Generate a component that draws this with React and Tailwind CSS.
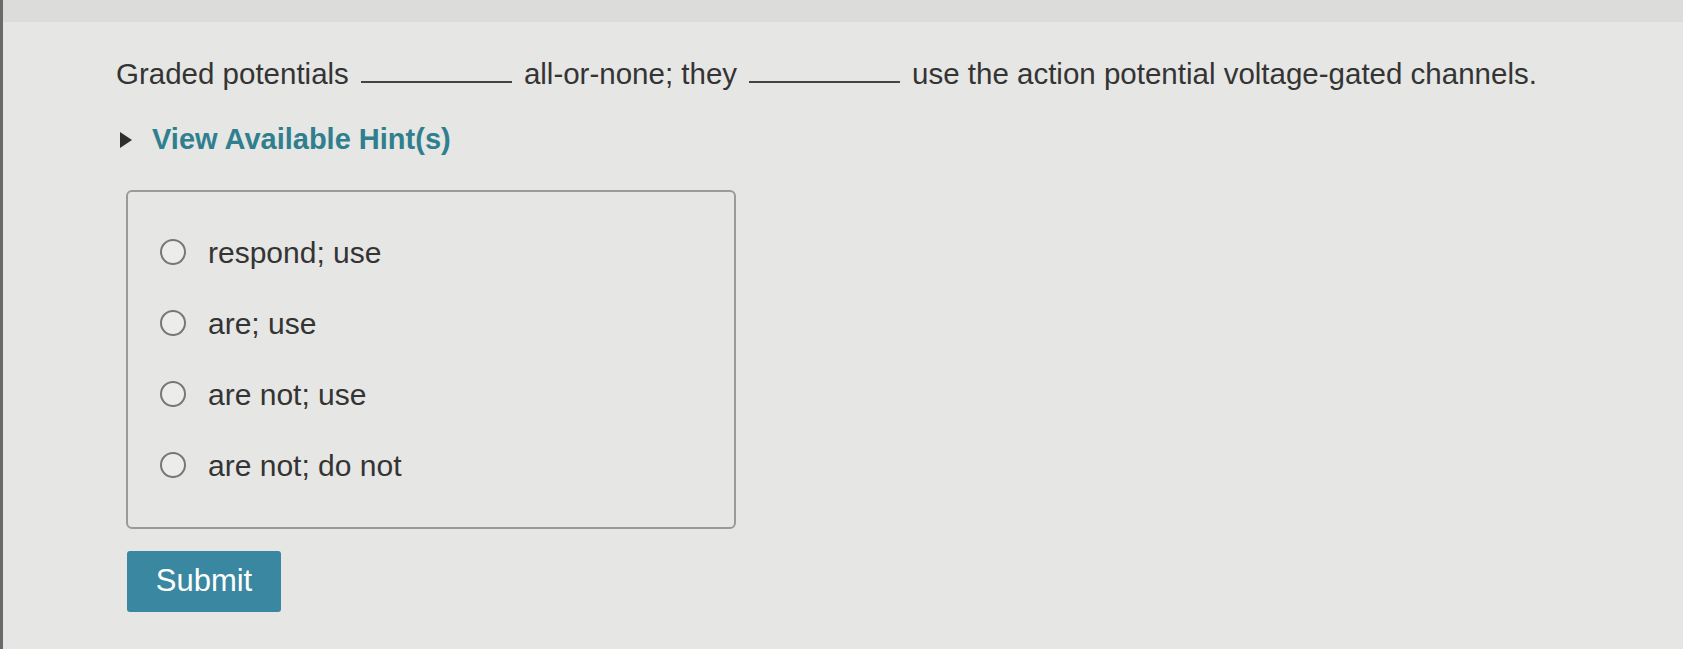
import React from "react";

const options = ["respond; use", "are; use", "are not; use", "are not; do not"];

function Blank() {
  return <span className="inline-block w-[151px] mx-[12px] border-b-2 border-[#444] -translate-y-[1px]" />;
}

export default function App() {
  return (
    <div
      className="w-[1683px] h-[649px] overflow-hidden bg-[#e6e6e4] text-[#343434] border-l-[3px] border-[#6a6a6a] flex flex-col"
      style={{ fontFamily: '"Liberation Sans", Arial, sans-serif' }}
    >
      <div className="h-[22px] bg-[#dcdcdb] shrink-0" />
      <div className="pl-[113px] flex flex-col">
        <p className="mt-[34px] text-[29.5px] leading-[36px]">
          Graded potentials
          <Blank />
          all-or-none; they
          <Blank />
          use the action potential voltage-gated channels.
        </p>

        <div className="mt-[30px] flex items-center gap-[20px] pl-[4px] h-[36px]">
          <svg width="12" height="16" viewBox="0 0 12 16">
            <path d="M0 0 L12 8 L0 16 Z" fill="#2e2e2e" />
          </svg>
          <span className="text-[29px] font-bold text-[#2f7f8e]">View Available Hint(s)</span>
        </div>

        <div className="mt-[32px] ml-[10px] w-[610px] h-[339px] border-2 border-[#9a9a9a] rounded-[6px] pt-[42px] pl-[32px] flex flex-col gap-[35px]">
          {options.map((o) => (
            <label key={o} className="flex items-center gap-[22px] h-[36px]">
              <span className="w-[26px] h-[26px] rounded-full border-2 border-[#777] bg-[#ececea] shrink-0" />
              <span className="text-[30px]">{o}</span>
            </label>
          ))}
        </div>

        <button className="mt-[22px] ml-[11px] w-[154px] h-[61px] bg-[#3a87a2] rounded-[3px] text-white text-[31px] self-start">
          Submit
        </button>
      </div>
    </div>
  );
}
